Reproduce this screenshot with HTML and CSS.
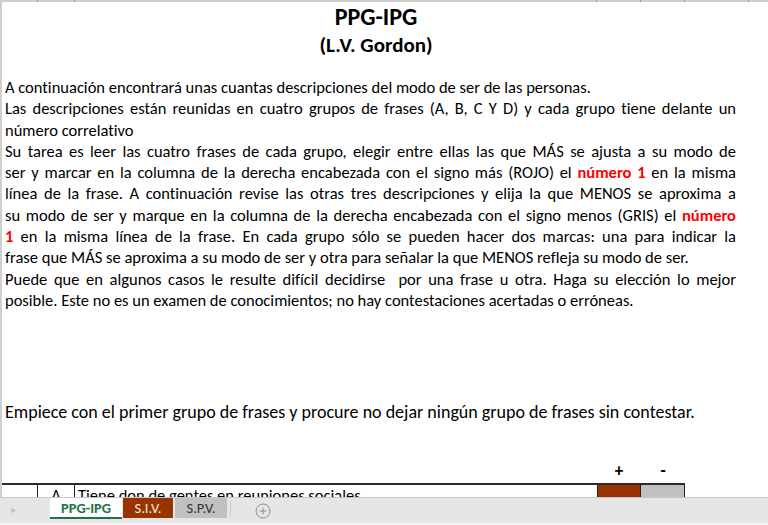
FILE: index.html
```html
<!DOCTYPE html>
<html lang="es">
<head>
<meta charset="utf-8">
<title>PPG-IPG</title>
<link rel="stylesheet" href="styles.css">
</head>
<body>
<div class="window">
  <div class="sheet">
    <div class="colhead">
      <span class="tick"></span><span class="tick"></span><span class="tick"></span><span class="tick"></span><span class="tick"></span><span class="tick"></span><span></span>
    </div>
    <div class="sheet-body">
      <div class="rowhead"></div>
      <div class="cells">
        <div class="title">PPG-IPG</div>
        <div class="subtitle">(L.V. Gordon)</div>
        <div class="intro">
          <div class="ln">A continuación encontrará unas cuantas descripciones del modo de ser de las personas.</div>
          <div class="ln j">Las descripciones están reunidas en cuatro grupos de frases (A, B, C Y D) y cada grupo tiene delante un</div>
          <div class="ln">número correlativo</div>
          <div class="ln j">Su tarea es leer las cuatro frases de cada grupo, elegir entre ellas las que MÁS se ajusta a su modo de</div>
          <div class="ln j">ser y marcar en la columna de la derecha encabezada con el signo más (ROJO) el <b class="red">número 1</b> en la misma</div>
          <div class="ln j">línea de la frase. A continuación revise las otras tres descripciones y elija la que MENOS se aproxima a</div>
          <div class="ln j">su modo de ser y marque en la columna de la derecha encabezada con el signo menos (GRIS) el <b class="red">número</b></div>
          <div class="ln j"><b class="red">1</b> en la misma línea de la frase. En cada grupo sólo se pueden hacer dos marcas: una para indicar la</div>
          <div class="ln">frase que MÁS se aproxima a su modo de ser y otra para señalar la que MENOS refleja su modo de ser.</div>
          <div class="ln j">Puede que en algunos casos le resulte difícil decidirse&nbsp; por una frase u otra. Haga su elección lo mejor</div>
          <div class="ln">posible. Este no es un examen de conocimientos; no hay contestaciones acertadas o erróneas.</div>
        </div>
        <div class="start">Empiece con el primer grupo de frases y procure no dejar ningún grupo de frases sin contestar.</div>
        <div class="signs">
          <span class="sign">+</span><span class="sign">-</span>
        </div>
        <div class="trow">
          <div class="c-a"></div>
          <div class="c-b">A</div>
          <div class="c-c">Tiene don de gentes en reuniones sociales</div>
          <div class="c-d"></div>
          <div class="c-e"></div>
        </div>
      </div>
    </div>
  </div>
  <div class="tabs">
    <span class="nav">&#9656;</span>
    <span class="tab active">PPG-IPG</span>
    <span class="tab siv">S.I.V.</span>
    <span class="tab spv">S.P.V.</span>
    <span class="sep"></span>
    <span class="add">
      <svg width="16" height="16" viewBox="0 0 16 16"><circle cx="8" cy="8" r="7" fill="none" stroke="#8c8c8c" stroke-width="1"/><path d="M8 4.5v7M4.5 8h7" stroke="#8c8c8c" stroke-width="1"/></svg>
    </span>
  </div>
</div>
</body>
</html>
```
FILE: styles.css
```css
html, body {
  margin: 0;
  padding: 0;
  background: #fff;
}
.window {
  width: 768px;
  height: 525px;
  overflow: hidden;
  display: flex;
  flex-direction: column;
  font-family: "Carlito", "Lato", "Liberation Sans", sans-serif;
  font-variant-ligatures: none;
  color: #000;
}
.sheet {
  height: 497px;
  overflow: hidden;
  display: flex;
  flex-direction: column;
}
.colhead {
  height: 2px;
  flex: none;
  background: #cfcfcf;
  display: grid;
  grid-template-columns: 38px 37px 522px 44px 44px 64px 1fr;
}
.colhead .tick {
  border-right: 1px solid #9a9a9a;
}
.sheet-body {
  flex: 1;
  display: flex;
  min-height: 0;
}
.rowhead {
  width: 2px;
  flex: none;
  background: #cfcfcf;
}
.cells {
  flex: 1;
  display: flex;
  flex-direction: column;
}
.title {
  height: 29px;
  line-height: 29px;
  text-align: center;
  font-weight: 700;
  font-size: 24px;
  padding-right: 18px;
}
.subtitle {
  height: 28px;
  line-height: 28px;
  text-align: center;
  font-weight: 700;
  font-size: 21px;
  padding-right: 18px;
}
.intro {
  margin-top: 18px;
  padding-left: 3px;
  width: 731px;
  font-size: 16.5px;
  line-height: 21.3px;
}
.ln {
  text-align: left;
}
.ln.j {
  text-align: justify;
  text-align-last: justify;
}
.red {
  color: #ff0000;
  font-weight: 700;
}
.start {
  margin-top: 91px;
  padding-left: 3px;
  font-size: 18px;
  line-height: 21.3px;
}
.signs {
  margin-top: 37px;
  height: 20px;
  display: grid;
  grid-template-columns: 595px 44px 44px;
  font-weight: 700;
  font-size: 17px;
  line-height: 20px;
}
.signs .sign:first-child {
  grid-column: 2;
  text-align: center;
}
.signs .sign:last-child {
  grid-column: 3;
  text-align: center;
}
.trow {
  margin-top: 2px;
  display: grid;
  grid-template-columns: 36px 37px 522px 44px 44px;
  border-top: 2px solid #2b2b2b;
  width: 683px;
  height: 12px;
  overflow: hidden;
  font-size: 16.5px;
  line-height: 4px;
}
.c-a {
  border-right: 1px solid #222;
}
.c-b {
  border-right: 1px solid #222;
  text-align: center;
  padding-top: 8px;
}
.c-c {
  padding-left: 3px;
  padding-top: 8px;
}
.c-d {
  background: #993300;
  border-left: 1px solid #222;
  border-right: 1px solid #222;
}
.c-e {
  background: #c0c0c0;
  border-right: 1px solid #222;
}
.tabs {
  flex: none;
  height: 25px;
  background: #e6e6e6;
  border-top: 1px solid #c6c6c6;
  border-bottom: 2px solid #f3f3f3;
  display: flex;
  align-items: flex-start;
  font-family: "Carlito", "Lato", "Liberation Sans", sans-serif;
  font-size: 14.5px;
}
.nav {
  width: 50px;
  color: #c2c2c2;
  font-size: 10px;
  line-height: 24px;
  padding-left: 11px;
  box-sizing: border-box;
}
.tab {
  height: 20px;
  line-height: 20px;
  text-align: center;
  box-sizing: border-box;
}
.tab.active {
  width: 72px;
  background: #fff;
  color: #217346;
  font-weight: 700;
  border-bottom: 2px solid #217346;
  height: 21px;
  line-height: 20px;
}
.tab.siv {
  width: 50px;
  margin-left: 1px;
  background: #993300;
  color: #f4e9e2;
}
.tab.spv {
  width: 52px;
  margin-left: 2px;
  background: #c0c0c0;
  color: #333;
}
.sep {
  width: 1px;
  height: 16px;
  margin-top: 3px;
  margin-left: 3px;
  background: #c9c9c9;
}
.add {
  margin-left: 24px;
  margin-top: 5px;
  height: 16px;
}
.add svg {
  display: block;
}
```
